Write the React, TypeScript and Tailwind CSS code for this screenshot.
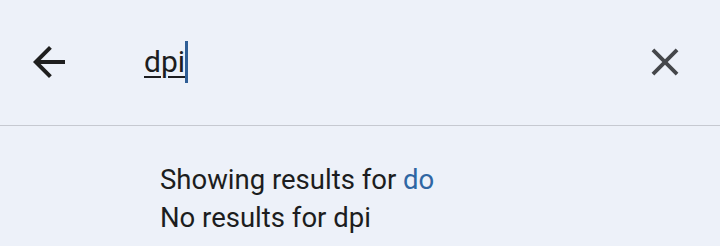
export default function App() {
  return (
    <div className="w-[720px] h-[246px] bg-[#edf1f9] font-['Roboto',sans-serif] text-[#1c1d20] overflow-hidden">
      <div className="h-[126px] flex items-center pl-[25px] pr-[32px] pb-[1px] border-b border-[#c6c9d1]">
        <svg viewBox="0 0 24 24" className="w-[48px] h-[48px] shrink-0" fill="#1f1f1f">
          <path d="M20 11H7.83l5.59-5.59L12 4l-8 8 8 8 1.41-1.41L7.83 13H20v-2z" />
        </svg>
        <div className="flex-1 ml-[71px] flex items-center">
          <span className="text-[30px] leading-[42px] underline decoration-[2px] underline-offset-[4px] decoration-[#1c1d20]">dpi</span>
          <span className="w-[3px] h-[42px] bg-[#2f5e96]" />
        </div>
        <svg viewBox="0 0 24 24" className="w-[46px] h-[46px] shrink-0" fill="#45474b">
          <path d="M19 6.41L17.59 5 12 10.59 6.41 5 5 6.41 10.59 12 5 17.59 6.41 19 12 13.41 17.59 19 19 17.59 13.41 12z" />
        </svg>
      </div>
      <div className="pl-[160px] pt-[35px] text-[27.5px] leading-[38px]">
        <div>
          Showing results for <span className="text-[#2f66a3]">do</span>
        </div>
        <div>No results for dpi</div>
      </div>
    </div>
  );
}
